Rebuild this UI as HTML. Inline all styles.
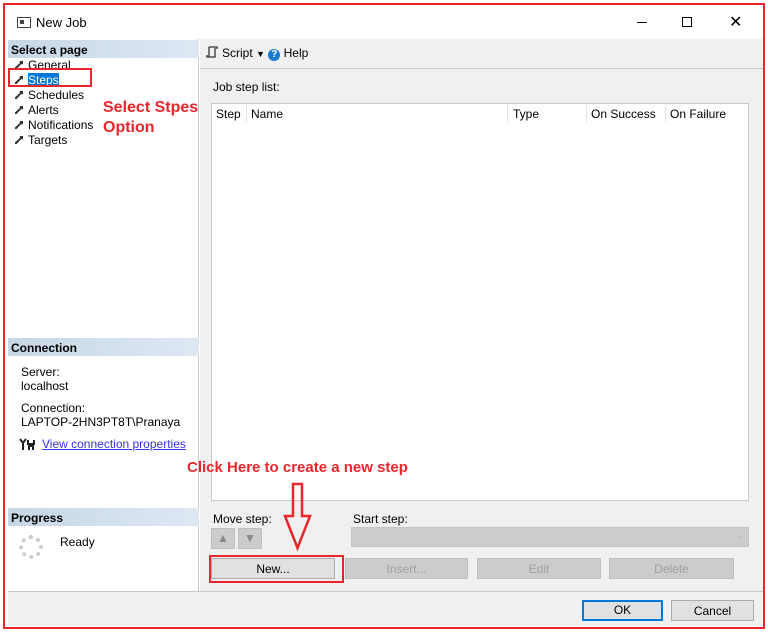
<!DOCTYPE html>
<html><head><style>
*{margin:0;padding:0;box-sizing:border-box}
body{width:768px;height:632px;background:#fff;font-family:"Liberation Sans",sans-serif;font-size:12px;color:#000;position:relative;overflow:hidden}
.a{position:absolute}
.red{color:#e8262b;font-weight:bold}
.btn{position:absolute;background:#e1e1e1;border:1px solid #adadad;text-align:center;line-height:20px;font-size:12px}
.dis{background:#cccccc;border-color:#bfbfbf;color:#a0a0a0}
.hdr{position:absolute;left:8px;width:191px;height:18px;background:linear-gradient(90deg,#c7d6e6,#dde8f3);font-weight:bold;padding:3px 3px;font-size:12px}
.it{position:absolute;left:15px;font-size:12px}
.it:before{content:"";display:inline-block;width:8px;height:8px;margin-right:5px;background:#333;clip-path:polygon(0 100%,20% 100%,75% 40%,100% 40%,100% 0,60% 0,60% 25%,0 80%)}
</style></head><body>
<!-- title -->
<div class="a" style="left:17px;top:17px;width:14px;height:11px;border:1px solid #444"></div>
<div class="a" style="left:20px;top:20px;width:4px;height:4px;background:#444"></div>
<div class="a" style="left:36px;top:15px;font-size:13px">New Job</div>
<div class="a" style="left:637px;top:22px;width:10px;height:1px;background:#000"></div>
<div class="a" style="left:682px;top:17px;width:10px;height:10px;border:1px solid #000"></div>
<div class="a" style="left:729px;top:12px;font-size:16px">✕</div>
<!-- left panel -->
<div class="a" style="left:8px;top:39px;width:191px;height:553px;background:#fff;border-right:1px solid #c8c8c8"></div>
<div class="hdr" style="top:40px">Select a page</div>
<div class="it" style="top:58px">General</div>
<div class="it" style="top:73px"><span style="background:#0078d7;color:#fff">Steps</span></div>
<div class="a" style="left:8px;top:68px;width:84px;height:19px;border:2px solid #e8262b"></div>
<div class="it" style="top:88px">Schedules</div>
<div class="it" style="top:103px">Alerts</div>
<div class="it" style="top:118px">Notifications</div>
<div class="it" style="top:133px">Targets</div>
<div class="a red" style="left:103px;top:98px;font-size:16px;line-height:20px">Select Stpes<br>Option</div>
<div class="hdr" style="top:338px">Connection</div>
<div class="a" style="left:21px;top:365px;line-height:14px">Server:<br>localhost</div>
<div class="a" style="left:21px;top:401px;line-height:14px">Connection:<br>LAPTOP-2HN3PT8T\Pranaya</div>
<svg class="a" style="left:19px;top:438px" width="16" height="13"><path d="M1 1 L4 5 L7 1 M4 5 V12 M9 2 V6 H15 V2 M10 6 V12 M14 6 V12 M9 8 H15" stroke="#222" stroke-width="2" fill="none"/></svg>
<div class="a" style="left:42px;top:437px;color:#3333ee;text-decoration:underline">View connection properties</div>
<div class="hdr" style="top:508px">Progress</div>
<div class="a" style="left:19px;top:535px;width:24px;height:24px;border-radius:50%;border:4px dotted #ccc"></div>
<div class="a" style="left:60px;top:535px">Ready</div>
<!-- right panel -->
<div class="a" style="left:200px;top:39px;width:564px;height:553px;background:#f0f0f0"></div>
<div class="a" style="left:200px;top:68px;width:564px;height:1px;background:#c8c8c8"></div>
<svg class="a" style="left:206px;top:46px" width="12" height="13"><path d="M3 1 H11 V3 M3 1 V11 H1 V9 M3 11 H9 V2" stroke="#333" stroke-width="1.3" fill="none"/></svg>
<div class="a" style="left:222px;top:46px">Script <span style="font-size:9px">▼</span> <span style="display:inline-block;width:12px;height:12px;border-radius:50%;background:#1a7ad4;color:#fff;font-size:10px;text-align:center;line-height:12px;font-weight:bold">?</span> Help</div>
<div class="a" style="left:213px;top:80px">Job step list:</div>
<div class="a" style="left:211px;top:103px;width:538px;height:398px;background:#fff;border:1px solid #c8c8c8"></div>
<div class="a" style="left:216px;top:107px">Step</div>
<div class="a" style="left:246px;top:104px;width:1px;height:18px;background:#e5e5e5"></div>
<div class="a" style="left:251px;top:107px">Name</div>
<div class="a" style="left:507px;top:104px;width:1px;height:18px;background:#e5e5e5"></div>
<div class="a" style="left:513px;top:107px">Type</div>
<div class="a" style="left:586px;top:104px;width:1px;height:18px;background:#e5e5e5"></div>
<div class="a" style="left:591px;top:107px">On Success</div>
<div class="a" style="left:665px;top:104px;width:1px;height:18px;background:#e5e5e5"></div>
<div class="a" style="left:670px;top:107px">On Failure</div>
<div class="a red" style="left:187px;top:459px;font-size:15px">Click Here to create a new step</div>
<div class="a" style="left:213px;top:512px">Move step:</div>
<div class="btn dis" style="left:211px;top:528px;width:24px;height:21px;color:#888;line-height:18px">▲</div>
<div class="btn dis" style="left:238px;top:528px;width:24px;height:21px;color:#888;line-height:18px">▼</div>
<div class="a" style="left:353px;top:512px">Start step:</div>
<div class="a" style="left:351px;top:527px;width:398px;height:20px;background:#cccccc;border:1px solid #c4c4c4;color:#aaa;text-align:right;padding-right:4px;font-size:10px;line-height:18px">⌵</div>
<!-- arrow -->
<svg class="a" style="left:283px;top:480px" width="30" height="72"><path d="M7 4 H16 V36 H24 L11.5 68 L-1 36 H7 Z" transform="translate(3,0)" fill="none" stroke="#e8262b" stroke-width="2.5"/></svg>
<div class="btn" style="left:211px;top:558px;width:124px;height:21px">New...</div>
<div class="a" style="left:209px;top:555px;width:135px;height:28px;border:2px solid #e8262b"></div>
<div class="btn dis" style="left:345px;top:558px;width:123px;height:21px">Insert...</div>
<div class="btn dis" style="left:477px;top:558px;width:124px;height:21px">Edit</div>
<div class="btn dis" style="left:609px;top:558px;width:125px;height:21px">Delete</div>
<!-- bottom -->
<div class="a" style="left:8px;top:591px;width:756px;height:1px;background:#c8c8c8"></div>
<div class="a" style="left:8px;top:592px;width:756px;height:34px;background:#f0f0f0"></div>
<div class="btn" style="left:582px;top:600px;width:81px;height:21px;border:2px solid #0078d7;line-height:17px">OK</div>
<div class="btn" style="left:671px;top:600px;width:83px;height:21px">Cancel</div>
<!-- red frame -->
<div class="a" style="left:3px;top:3px;width:762px;height:626px;border:2px solid #e8262b"></div>
</body></html>
